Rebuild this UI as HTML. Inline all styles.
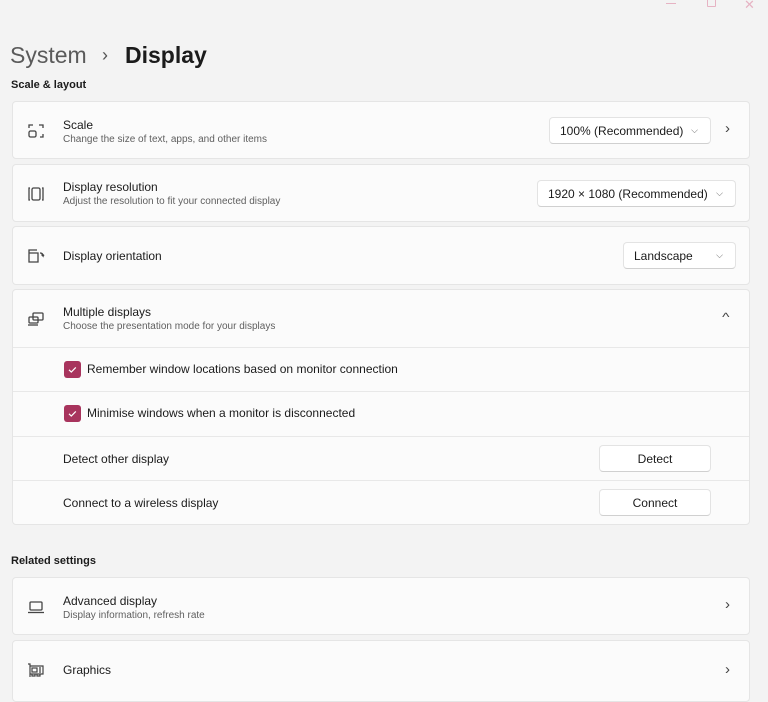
<!DOCTYPE html>
<html><head><meta charset="utf-8"><style>
*{box-sizing:border-box;margin:0;padding:0}
body{width:768px;height:692px;overflow:hidden;background:#f3f3f3;font-family:"Liberation Sans",sans-serif;color:#1b1b1b;position:relative}
.abs{position:absolute}
.card{position:absolute;left:12px;width:738px;background:#fbfbfb;border:1px solid #e5e5e5;border-radius:4px}
.t{position:absolute;left:50px;font-size:12px;color:#1b1b1b}
.s{position:absolute;left:50px;font-size:10px;color:#5f5f5f}
.dd{position:absolute;background:#fff;border:1px solid #e3e3e3;border-bottom-color:#d0d0d0;border-radius:4px;font-size:12px;color:#1b1b1b;display:flex;align-items:center}
.sep{position:absolute;left:0;right:0;height:1px;background:#e8e8e8}
.cb{position:absolute;left:51px;width:17px;height:17px;border-radius:3px;background:#a8345d}
.ic{position:absolute;left:14px}
</style></head><body>
<div class="abs" style="left:666px;top:3px;width:10px;height:1px;background:#e6b3c3"></div>
<div class="abs" style="left:707px;top:-2px;width:9px;height:9px;border:1px solid #e6b3c3;border-radius:1px"></div>
<div class="abs" style="left:744px;top:-3px;font-size:13px;color:#e6b3c3">✕</div>

<div class="abs" style="left:10px;top:42px;font-size:23px;color:#5a5a5a">System</div>
<div class="abs" style="left:102px;top:45px;font-size:18px;color:#555">›</div>
<div class="abs" style="left:125px;top:42px;font-size:23px;font-weight:bold;color:#1b1b1b">Display</div>
<div class="abs" style="left:11px;top:79px;font-size:11px;font-weight:bold">Scale &amp; layout</div>

<div class="card" style="top:101px;height:58px">
<svg class="ic" style="top:20px" width="18" height="18" viewBox="0 0 18 18" fill="none" stroke="#444" stroke-width="1.3"><path d="M2 6V3h4M12 3h4v3M16 12v3h-3"/><rect x="2" y="9" width="7" height="6" rx="1.5"/></svg>
<div class="t" style="top:16px">Scale</div><div class="s" style="top:32px">Change the size of text, apps, and other items</div>
<div class="dd" style="left:536px;top:15px;width:162px;height:27px;padding-left:10px">100% (Recommended)<span style="position:absolute;right:12px;font-size:9px;color:#666">⌵</span></div>
<div class="abs" style="left:712px;top:18px;font-size:15px;color:#444">›</div>
</div>

<div class="card" style="top:164px;height:58px">
<svg class="ic" style="top:20px" width="18" height="18" viewBox="0 0 18 18" fill="none" stroke="#444" stroke-width="1.3"><path d="M3 3H2v12h1M15 3h1v12h-1"/><rect x="5" y="3" width="8" height="12" rx="1.5"/></svg>
<div class="t" style="top:15px">Display resolution</div><div class="s" style="top:31px">Adjust the resolution to fit your connected display</div>
<div class="dd" style="left:524px;top:15px;width:199px;height:27px;padding-left:10px">1920 × 1080 (Recommended)<span style="position:absolute;right:12px;font-size:9px;color:#666">⌵</span></div>
</div>

<div class="card" style="top:226px;height:59px">
<svg class="ic" style="top:20px" width="18" height="18" viewBox="0 0 18 18" fill="none" stroke="#444" stroke-width="1.3"><path d="M2 6V3h8M2 6h9v9H2zM13 6c2 0 3 1 3 3l-1.5-1.5M16 9l1-1.3"/></svg>
<div class="t" style="top:22px">Display orientation</div>
<div class="dd" style="left:610px;top:15px;width:113px;height:27px;padding-left:10px">Landscape<span style="position:absolute;right:12px;font-size:9px;color:#666">⌵</span></div>
</div>

<div class="card" style="top:289px;height:236px">
<svg class="ic" style="top:20px" width="18" height="18" viewBox="0 0 18 18" fill="none" stroke="#444" stroke-width="1.3"><rect x="6" y="3" width="10" height="7" rx="1"/><rect x="2" y="7" width="9" height="6" rx="1"/><path d="M1 15h10"/></svg>
<div class="t" style="top:15px">Multiple displays</div><div class="s" style="top:31px">Choose the presentation mode for your displays</div>
<div class="abs" style="left:710px;top:20px;font-size:12px;color:#444;transform:scaleX(1.3)">^</div>
<div class="sep" style="top:57px"></div>
<div class="cb" style="top:71px"><svg width="17" height="17" viewBox="0 0 17 17"><path d="M5 8.8l2.3 2.2 4.5-4.6" fill="none" stroke="#fff" stroke-width="1.2"/></svg></div>
<div class="t" style="left:74px;top:72px">Remember window locations based on monitor connection</div>
<div class="sep" style="top:101px"></div>
<div class="cb" style="top:115px"><svg width="17" height="17" viewBox="0 0 17 17"><path d="M5 8.8l2.3 2.2 4.5-4.6" fill="none" stroke="#fff" stroke-width="1.2"/></svg></div>
<div class="t" style="left:74px;top:116px">Minimise windows when a monitor is disconnected</div>
<div class="sep" style="top:146px"></div>
<div class="t" style="top:162px">Detect other display</div>
<div class="dd" style="left:586px;top:155px;width:112px;height:27px;justify-content:center">Detect</div>
<div class="sep" style="top:190px"></div>
<div class="t" style="top:206px">Connect to a wireless display</div>
<div class="dd" style="left:586px;top:199px;width:112px;height:27px;justify-content:center">Connect</div>
</div>

<div class="abs" style="left:11px;top:555px;font-size:11px;font-weight:bold">Related settings</div>

<div class="card" style="top:577px;height:58px">
<svg class="ic" style="top:20px" width="18" height="18" viewBox="0 0 18 18" fill="none" stroke="#444" stroke-width="1.3"><rect x="3" y="4" width="12" height="8" rx="1"/><path d="M1 14.5h16"/></svg>
<div class="t" style="top:16px">Advanced display</div><div class="s" style="top:32px">Display information, refresh rate</div>
<div class="abs" style="left:712px;top:18px;font-size:15px;color:#444">›</div>
</div>

<div class="card" style="top:640px;height:62px">
<svg class="ic" style="top:20px" width="18" height="18" viewBox="0 0 18 18" fill="none" stroke="#444" stroke-width="1.2"><path d="M1 3h2v13M3 5h13v8H3M5 13v2h3v-2M10 13v2h3v-2"/><rect x="5" y="7" width="5" height="4"/><path d="M12 7h2M12 9h2M12 11h2"/></svg>
<div class="t" style="top:22px">Graphics</div>
<div class="abs" style="left:712px;top:20px;font-size:15px;color:#444">›</div>
</div>
</body></html>
